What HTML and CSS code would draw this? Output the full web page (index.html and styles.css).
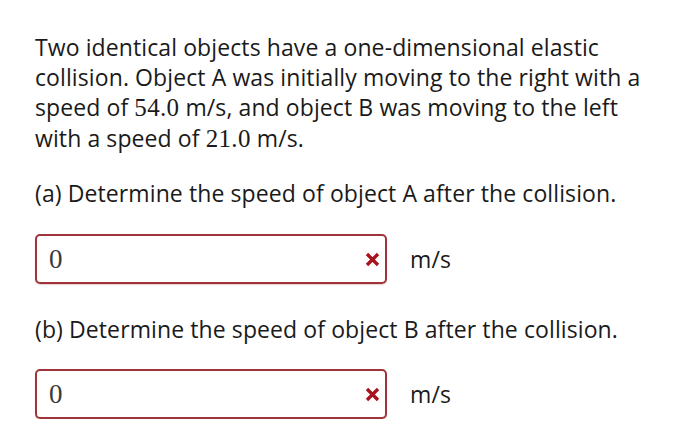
FILE: index.html
```html
<!DOCTYPE html>
<html>
<head>
<meta charset="utf-8">
<link rel="stylesheet" href="styles.css">
</head>
<body>
<div class="page">
  <p class="intro">Two identical objects have a one-dimensional elastic collision. Object A was initially moving to the right with a speed of <span class="num">54.0</span> m/s, and object B was moving to the left with a speed of <span class="num">21.0</span> m/s.</p>

  <p class="question q-a">(a) Determine the speed of object A after the collision.</p>
  <div class="answer answer-a">
    <div class="field">
      <span class="value">0</span>
      <svg class="wrong" width="15" height="15" viewBox="0 0 15 15"><path d="M2 2 L13 13 M13 2 L2 13" stroke="#a8121c" stroke-width="3.3" stroke-linecap="butt"/></svg>
    </div>
    <span class="unit">m/s</span>
  </div>

  <p class="question q-b">(b) Determine the speed of object B after the collision.</p>
  <div class="answer answer-b">
    <div class="field">
      <span class="value">0</span>
      <svg class="wrong" width="15" height="15" viewBox="0 0 15 15"><path d="M2 2 L13 13 M13 2 L2 13" stroke="#a8121c" stroke-width="3.3" stroke-linecap="butt"/></svg>
    </div>
    <span class="unit">m/s</span>
  </div>
</div>
</body>
</html>
```

FILE: styles.css
```css
html, body {
  margin: 0;
  padding: 0;
  background: #ffffff;
}
.page {
  padding: 32px 0 0 35px;
  font-family: "Open Sans", "Lato", sans-serif;
  font-size: 23px;
  letter-spacing: 0.1px;
  line-height: 30px;
  color: #1a1a1a;
}
p {
  margin: 0;
}
.intro {
  width: 625px;
}
.num {
  font-family: "Liberation Serif", serif;
  font-size: 25px;
  letter-spacing: 0.3px;
}
.q-a {
  margin-top: 24px;
}
.q-b {
  margin-top: 30px;
}
.answer {
  display: flex;
  align-items: center;
}
.answer-a {
  margin-top: 26px;
}
.answer-b {
  margin-top: 25px;
}
.field {
  box-sizing: border-box;
  width: 352px;
  height: 50px;
  border: 2px solid #a0343b;
  border-radius: 5px;
  box-shadow: 0 1px 1px rgba(160, 52, 59, 0.25);
  display: flex;
  align-items: center;
  justify-content: space-between;
  padding: 0 5px 0 12px;
}
.value {
  font-family: "Liberation Serif", serif;
  font-size: 27px;
  color: #3a3a3a;
}
.unit {
  margin-left: 23px;
}
```
